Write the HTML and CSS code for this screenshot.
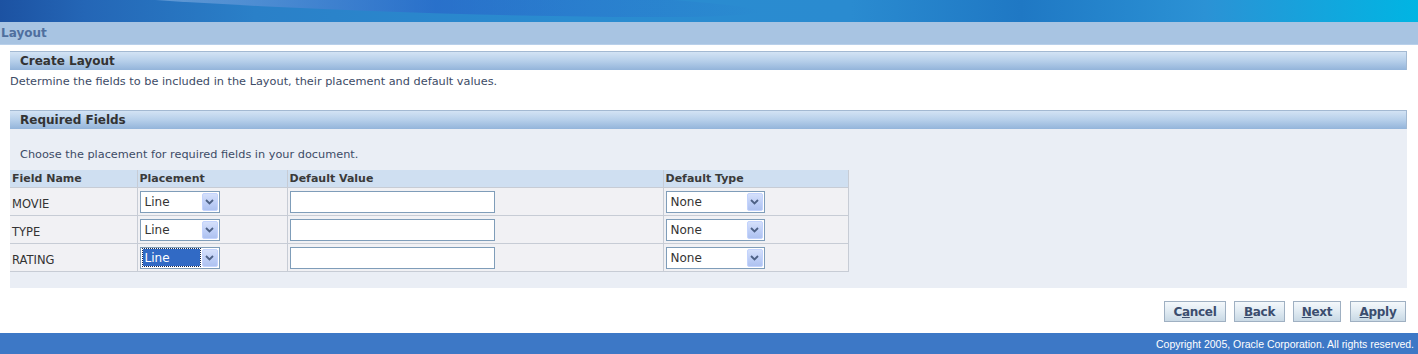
FILE: index.html
```html
<!DOCTYPE html>
<html>
<head>
<meta charset="utf-8">
<link rel="stylesheet" href="styles.css">
</head>
<body>
<div class="banner"><div class="streak"></div></div>
<div class="titlebar">Layout</div>
<div class="content">
  <div class="section-head">Create Layout</div>
  <p class="desc">Determine the fields to be included in the Layout, their placement and default values.</p>
  <div class="section-head">Required Fields</div>
  <div class="panel">
    <p class="instr">Choose the placement for required fields in your document.</p>
    <table class="fields">
      <colgroup>
        <col class="w1"><col class="w2"><col class="w3"><col class="w4">
      </colgroup>
      <thead>
        <tr>
          <th class="c1">Field Name</th>
          <th>Placement</th>
          <th>Default Value</th>
          <th>Default Type</th>
        </tr>
      </thead>
      <tbody>
        <tr>
          <td class="name">MOVIE</td>
          <td><div class="select sel-place"><span class="val">Line</span><span class="arrow"><svg width="9" height="6" viewBox="0 0 9 6"><path d="M1 1 L4.5 4.5 L8 1" fill="none" stroke="#4d6185" stroke-width="1.8"/></svg></span></div></td>
          <td><div class="text-input"></div></td>
          <td><div class="select sel-type"><span class="val">None</span><span class="arrow"><svg width="9" height="6" viewBox="0 0 9 6"><path d="M1 1 L4.5 4.5 L8 1" fill="none" stroke="#4d6185" stroke-width="1.8"/></svg></span></div></td>
        </tr>
        <tr>
          <td class="name">TYPE</td>
          <td><div class="select sel-place"><span class="val">Line</span><span class="arrow"><svg width="9" height="6" viewBox="0 0 9 6"><path d="M1 1 L4.5 4.5 L8 1" fill="none" stroke="#4d6185" stroke-width="1.8"/></svg></span></div></td>
          <td><div class="text-input"></div></td>
          <td><div class="select sel-type"><span class="val">None</span><span class="arrow"><svg width="9" height="6" viewBox="0 0 9 6"><path d="M1 1 L4.5 4.5 L8 1" fill="none" stroke="#4d6185" stroke-width="1.8"/></svg></span></div></td>
        </tr>
        <tr>
          <td class="name">RATING</td>
          <td><div class="select sel-place focused"><span class="val">Line</span><span class="arrow"><svg width="9" height="6" viewBox="0 0 9 6"><path d="M1 1 L4.5 4.5 L8 1" fill="none" stroke="#4d6185" stroke-width="1.8"/></svg></span></div></td>
          <td><div class="text-input"></div></td>
          <td><div class="select sel-type"><span class="val">None</span><span class="arrow"><svg width="9" height="6" viewBox="0 0 9 6"><path d="M1 1 L4.5 4.5 L8 1" fill="none" stroke="#4d6185" stroke-width="1.8"/></svg></span></div></td>
        </tr>
      </tbody>
    </table>
  </div>
  <div class="buttons">
    <button class="btn b-cancel">C<u>a</u>ncel</button>
    <button class="btn b-back"><u>B</u>ack</button>
    <button class="btn b-next"><u>N</u>ext</button>
    <button class="btn b-apply"><u>A</u>pply</button>
  </div>
</div>
<div class="footer">Copyright 2005, Oracle Corporation. All rights reserved.</div>
</body>
</html>
```
FILE: styles.css
```css
html, body {
  margin: 0;
  padding: 0;
  background: #ffffff;
}
body {
  width: 1418px;
  height: 354px;
  overflow: hidden;
  font-family: "DejaVu Sans", Verdana, sans-serif;
  font-size: 11.3px;
  color: #333;
}
.banner {
  height: 22px;
  position: relative;
  overflow: hidden;
  background: linear-gradient(90deg, #1c52a2 0%, #2466b6 6%, #2a80c8 18%, #2a8cd0 40%, #2a8bd0 60%, #1f78c4 72%, #2b92d5 85%, #00b5e3 100%);
}
.streak {
  position: absolute;
  left: 40px;
  top: -14px;
  width: 720px;
  height: 26px;
  border-radius: 50%;
  background: linear-gradient(90deg, rgba(120,170,220,0.0) 0%, rgba(130,175,225,0.6) 18%, rgba(40,90,200,0.5) 55%, rgba(40,110,210,0) 100%);
  transform: rotate(2deg);
}
.titlebar {
  height: 23px;
  line-height: 23px;
  background: #a8c4e2;
  color: #4f6f9e;
  font-weight: bold;
  font-size: 12px;
  padding-left: 1px;
  border-bottom: 1px solid #b9d0ea;
  box-sizing: border-box;
}
.content {
  margin: 6px 11px 0 10px;
}
.section-head {
  height: 19px;
  line-height: 18px;
  box-sizing: border-box;
  border-top: 1px solid #a3b9d2;
  border-right: 1px solid #a3b9d2;
  background: linear-gradient(180deg, #d3e3f4 0%, #b6cfea 50%, #93b4da 100%);
  font-weight: bold;
  font-size: 12px;
  color: #333;
  padding-left: 10px;
}
.desc {
  margin: 0;
  height: 40px;
  line-height: 23px;
  color: #3c4b66;
}
.panel {
  background: #eaeef5;
  height: 159px;
  padding: 18px 0 0 0;
  box-sizing: border-box;
}
.instr {
  margin: 0 0 8px 10px;
  color: #3c4b66;
  line-height: 15px;
}
.fields {
  border-collapse: collapse;
  table-layout: fixed;
  width: 838px;
  font-size: 11.3px;
}
.w1 { width: 127px; }
.w2 { width: 150px; }
.w3 { width: 376px; }
.w4 { width: 185px; }
.fields th {
  background: #cfdff1;
  text-align: left;
  font-weight: bold;
  color: #3a3a3a;
  font-size: 11px;
  height: 17px;
  padding: 0 2px;
  border: 1px solid #c7ccd5;
  border-top: none;
}
.fields th.c1 { border-left: none; }
.fields td {
  background: #f1f1f4;
  border: 1px solid #c7ccd5;
  height: 23px;
  padding: 0 2px;
  vertical-align: middle;
}
.fields td:first-child { border-left: none; }
.fields td.name {
  color: #333;
  padding-top: 4px;
  font-size: 11.5px;
}
.select {
  display: flex;
  align-items: center;
  justify-content: space-between;
  height: 22px;
  box-sizing: border-box;
  border: 1px solid #7f9db9;
  background: #fff;
  padding: 0 1px 0 2px;
}
.sel-place { width: 80px; }
.sel-type { width: 99px; }
.select .val {
  color: #333;
  padding: 2px 2px 1px;
  line-height: 14px;
  font-size: 12px;
}
.select.focused .val {
  background: #316ac5;
  color: #fff;
  outline: 1px dotted #1a2a50;
  width: 53px;
}
.arrow {
  width: 16px;
  height: 18px;
  box-sizing: border-box;
  border: 1px solid #c3d3fd;
  border-radius: 2px;
  background: linear-gradient(180deg, #d5e0fb 0%, #bccdf6 60%, #aec2f0 100%);
  display: flex;
  align-items: center;
  justify-content: center;
}
.text-input {
  width: 205px;
  height: 22px;
  box-sizing: border-box;
  border: 1px solid #7f9db9;
  background: #fff;
}
.buttons {
  display: flex;
  justify-content: flex-end;
  gap: 8px;
  margin-top: 13px;
  padding-right: 1px;
}
.btn {
  height: 21px;
  box-sizing: border-box;
  border: 1px solid #9fb0c2;
  background: linear-gradient(180deg, #f4f8fb 0%, #e2ecf3 45%, #c9d9e5 100%);
  font-family: "DejaVu Sans", Verdana, sans-serif;
  font-weight: bold;
  font-size: 12px;
  color: #3b4d6e;
  padding: 0;
  letter-spacing: -0.3px;
}
.b-cancel { width: 62px; }
.b-back { width: 51px; }
.b-next { width: 48px; }
.b-apply { width: 56px; margin-left: 1px; }
.footer {
  margin-top: 11px;
  height: 22px;
  line-height: 22px;
  background: #3d78c6;
  color: #fff;
  font-family: "Liberation Sans", Arial, sans-serif;
  font-size: 10.5px;
  text-align: right;
  padding-right: 4px;
}
```
